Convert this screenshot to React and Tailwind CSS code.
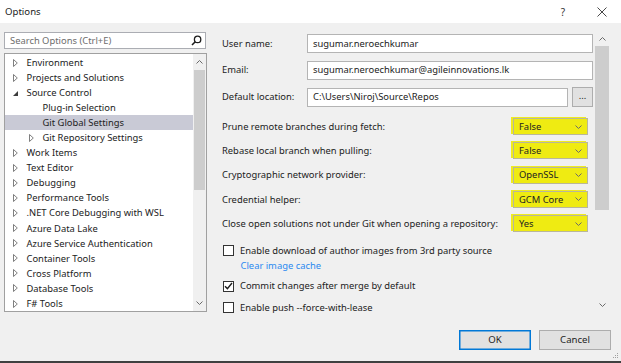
import React from "react";

const treeItems = [
  { label: "Environment", level: 0, arrow: "closed" },
  { label: "Projects and Solutions", level: 0, arrow: "closed" },
  { label: "Source Control", level: 0, arrow: "open" },
  { label: "Plug-in Selection", level: 1 },
  { label: "Git Global Settings", level: 1, selected: true },
  { label: "Git Repository Settings", level: 1, arrow: "closed" },
  { label: "Work Items", level: 0, arrow: "closed" },
  { label: "Text Editor", level: 0, arrow: "closed" },
  { label: "Debugging", level: 0, arrow: "closed" },
  { label: "Performance Tools", level: 0, arrow: "closed" },
  { label: ".NET Core Debugging with WSL", level: 0, arrow: "closed" },
  { label: "Azure Data Lake", level: 0, arrow: "closed" },
  { label: "Azure Service Authentication", level: 0, arrow: "closed" },
  { label: "Container Tools", level: 0, arrow: "closed" },
  { label: "Cross Platform", level: 0, arrow: "closed" },
  { label: "Database Tools", level: 0, arrow: "closed" },
  { label: "F# Tools", level: 0, arrow: "closed" },
];

const dropdowns = [
  { label: "Prune remote branches during fetch:", value: "False" },
  { label: "Rebase local branch when pulling:", value: "False" },
  { label: "Cryptographic network provider:", value: "OpenSSL" },
  { label: "Credential helper:", value: "GCM Core" },
  { label: "Close open solutions not under Git when opening a repository:", value: "Yes" },
];

function Chevron({ up = false }) {
  return (
    <svg width="7" height="4" viewBox="0 0 7 4" className="block">
      <path
        d={up ? "M0.5 3.5 L3.5 0.5 L6.5 3.5" : "M0.5 0.5 L3.5 3.5 L6.5 0.5"}
        fill="none"
        stroke="#6a6a6a"
        strokeWidth="1"
      />
    </svg>
  );
}

function TreeArrow({ type }) {
  if (type === "open") {
    return (
      <svg width="5" height="5" viewBox="0 0 5 5" className="block mt-[1px]">
        <polygon points="5,0 5,5 0,5" fill="#3c3c3c" />
      </svg>
    );
  }
  return (
    <svg width="5" height="8" viewBox="0 0 5 8" className="block">
      <path d="M0.5 0.5 L4.3 4 L0.5 7.5 Z" fill="none" stroke="#707070" strokeWidth="0.9" />
    </svg>
  );
}

function TextInput({ value, width }) {
  return (
    <div
      className={`${width} h-[19px] bg-white border border-[#b4b4b4] flex items-center pl-[5px] whitespace-nowrap overflow-hidden`}
    >
      {value}
    </div>
  );
}

function Checkbox({ checked }) {
  return (
    <div className="w-[11px] h-[11px] border border-[#333] bg-white flex items-center justify-center shrink-0">
      {checked && (
        <svg width="9" height="8" viewBox="0 0 9 8">
          <path d="M1 4.2 L3.4 6.6 L8 1" fill="none" stroke="#1e1e1e" strokeWidth="1.4" />
        </svg>
      )}
    </div>
  );
}

export default function App() {
  return (
    <div className="relative w-[621px] h-[363px] bg-[#f0f0f0] flex flex-col overflow-hidden font-['Noto_Sans',sans-serif] text-[9.4px] leading-none text-[#222]">
      {/* Title bar */}
      <div className="h-[23px] shrink-0 bg-white flex items-center pl-[5px] pt-[1px]">
        <span className="text-[9.6px]">Options</span>
        <span className="ml-auto mr-[32px] text-[10px] text-[#333]">?</span>
        <svg width="10" height="10" viewBox="0 0 10 10" className="mr-[14px]">
          <path d="M0.5 0.5 L9.5 9.5 M9.5 0.5 L0.5 9.5" stroke="#333" strokeWidth="0.9" />
        </svg>
      </div>

      <div className="flex flex-1 min-h-0">
        {/* Left column: search + tree */}
        <div className="w-[207px] shrink-0 pl-[4px] pt-[9px] flex flex-col">
          <div className="w-[202px] h-[17px] bg-white border border-[#abadb3] flex items-center pl-[5px] pr-[3px]">
            <span className="text-[#6d6d6d]">Search Options (Ctrl+E)</span>
            <svg width="11" height="11" viewBox="0 0 11 11" className="ml-auto">
              <circle cx="6.6" cy="4.4" r="3.2" fill="none" stroke="#1e1e1e" strokeWidth="1.3" />
              <path d="M4.3 6.7 L1 10" stroke="#1e1e1e" strokeWidth="1.6" />
            </svg>
          </div>
          <div className="mt-[4px] w-[203px] h-[259px] bg-white border border-[#a0a0a0] flex">
            <div className="flex-1 flex flex-col pt-[1px]">
              {treeItems.map((item) => (
                <div
                  key={item.label}
                  className={`h-[15.08px] flex items-center whitespace-nowrap ${
                    item.level === 0 ? "pl-[8px]" : "pl-[24px]"
                  } ${item.selected ? "bg-[#c9cad6]" : ""}`}
                >
                  <span className="w-[13.5px] shrink-0 flex items-center">
                    {item.arrow && <TreeArrow type={item.arrow} />}
                  </span>
                  <span>{item.label}</span>
                </div>
              ))}
            </div>
            <div className="w-[13px] bg-[#f0f0f0] flex flex-col items-center">
              <div className="h-[16px] flex items-center">
                <Chevron up />
              </div>
              <div className="w-[11px] h-[120px] bg-[#cdcdcd]" />
              <div className="flex-1" />
              <div className="h-[16px] flex items-center">
                <Chevron />
              </div>
            </div>
          </div>
        </div>

        {/* Right column: settings */}
        <div className="flex-1 flex flex-col pl-[15px]">
          <div className="h-[290px] pt-[9px] flex">
            <div className="w-[371px] pt-[2px] flex flex-col">
              <div className="flex items-center">
                <span className="w-[85px] shrink-0">User name:</span>
                <TextInput width="w-[286px]" value="sugumar.neroechkumar" />
              </div>
              <div className="flex items-center mt-[7.5px]">
                <span className="w-[85px] shrink-0">Email:</span>
                <TextInput width="w-[286px]" value="sugumar.neroechkumar@agileinnovations.lk" />
              </div>
              <div className="flex items-center mt-[7.5px]">
                <span className="w-[85px] shrink-0">Default location:</span>
                <TextInput width="w-[261px]" value="C:\Users\Niroj\Source\Repos" />
                <div className="ml-[4px] w-[21px] h-[20px] bg-[#e1e1e1] border border-[#adadad] flex items-end justify-center pb-[6px]">
                  ...
                </div>
              </div>

              <div className="mt-[11px] flex flex-col gap-[7.3px] pr-[5px]">
                {dropdowns.map((d) => (
                  <div key={d.label} className="flex items-center justify-between">
                    <span className="whitespace-nowrap">{d.label}</span>
                    <div className="w-[75px] h-[17px] bg-[#efeb12] border border-[#b9b79a] flex items-center pl-[5px] pr-[5px] shadow-[-2px_-1px_0_0_#efeb20]">
                      <span>{d.value}</span>
                      <span className="ml-auto">
                        <Chevron />
                      </span>
                    </div>
                  </div>
                ))}
              </div>

              <div className="mt-[13.3px] flex items-center ml-[1px] gap-[6px] h-[11px]">
                <Checkbox />
                <span className="whitespace-nowrap">Enable download of author images from 3rd party source</span>
              </div>
              <div className="mt-[4px] h-[11px] flex items-center ml-[18.5px] text-[#2a8af0]">
                Clear image cache
              </div>
              <div className="mt-[9.5px] flex items-center ml-[1px] gap-[6px] h-[11px]">
                <Checkbox checked />
                <span>Commit changes after merge by default</span>
              </div>
              <div className="mt-[10.5px] flex items-center ml-[1px] gap-[6px] h-[11px]">
                <Checkbox />
                <span>Enable push --force-with-lease</span>
              </div>
            </div>

            <div className="ml-[2px] w-[14px] flex flex-col items-center">
              <div className="h-[14px] flex items-center">
                <Chevron up />
              </div>
              <div className="w-[14px] h-[164px] bg-[#cdcdcd]" />
              <div className="flex-1" />
              <div className="h-[16px] flex items-center">
                <Chevron />
              </div>
            </div>
          </div>

          <div className="mt-[17px] flex justify-end gap-[8px] pr-[10px]">
            <button className="w-[72px] h-[20px] bg-[#e1e1e1] border border-[#0078d7] shadow-[inset_0_0_0_0.5px_#0078d7] text-[9.6px] text-[#1e1e1e]">
              OK
            </button>
            <button className="w-[72px] h-[20px] bg-[#e1e1e1] border border-[#adadad] text-[9.6px] text-[#1e1e1e]">
              Cancel
            </button>
          </div>
        </div>
      </div>

      <div className="h-[2px] shrink-0 bg-[#404040]" />

      {/* resize grip */}
      <svg width="7" height="7" viewBox="0 0 7 7" className="absolute right-[2px] bottom-[3px]">
        <rect x="5" y="0" width="1" height="1" fill="#a0a0a0" />
        <rect x="3" y="2" width="1" height="1" fill="#a0a0a0" />
        <rect x="5" y="2" width="1" height="1" fill="#a0a0a0" />
        <rect x="1" y="4" width="1" height="1" fill="#a0a0a0" />
        <rect x="3" y="4" width="1" height="1" fill="#a0a0a0" />
        <rect x="5" y="4" width="1" height="1" fill="#a0a0a0" />
      </svg>
    </div>
  );
}
